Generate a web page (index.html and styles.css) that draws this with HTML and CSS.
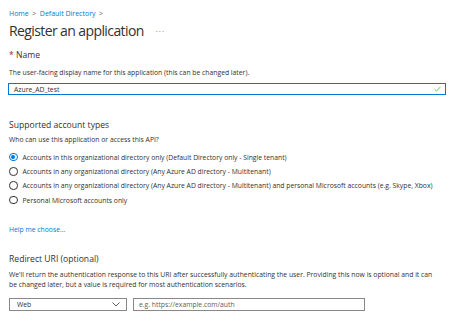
FILE: index.html
```html
<!DOCTYPE html>
<html lang="en">
<head>
    <meta charset="UTF-8">
    <title>Register an application</title>
    <link rel="stylesheet" href="styles.css">
</head>
<body>
    <div class="blade">
        <!-- Breadcrumb -->
        <nav class="crumbs">
            <a href="#">Home</a><span class="sep">&gt;</span><a href="#">Default Directory</a><span class="sep">&gt;</span>
        </nav>

        <div class="title-row">
            <h1>Register an application</h1>
            <span class="more">&middot;&middot;&middot;</span>
        </div>

        <!-- Name -->
        <section class="name-section">
            <h2 class="label"><span class="req">*</span> Name</h2>
            <p class="hint">The user-facing display name for this application (this can be changed later).</p>
            <div class="text-box active">
                <span>Azure_AD_test</span>
                <svg class="check" width="7" height="6" viewBox="0 0 7 6"><path d="M0.5 3.2 L2.5 5 L6.5 0.8" fill="none" stroke="#7fba4f" stroke-width="1"/></svg>
            </div>
        </section>

        <!-- Account types -->
        <section class="types-section">
            <h2 class="label">Supported account types</h2>
            <p class="hint">Who can use this application or access this API?</p>
            <ul class="radios">
                <li><span class="radio checked"></span>Accounts in this organizational directory only (Default Directory only - Single tenant)</li>
                <li><span class="radio"></span>Accounts in any organizational directory (Any Azure AD directory - Multitenant)</li>
                <li><span class="radio"></span>Accounts in any organizational directory (Any Azure AD directory - Multitenant) and personal Microsoft accounts (e.g. Skype, Xbox)</li>
                <li><span class="radio"></span>Personal Microsoft accounts only</li>
            </ul>
            <a class="help" href="#">Help me choose...</a>
        </section>

        <!-- Redirect -->
        <section class="redirect-section">
            <h2 class="label">Redirect URI (optional)</h2>
            <p class="hint wrap">We'll return the authentication response to this URI after successfully authenticating the user. Providing this now is optional and it can be changed later, but a value is required for most authentication scenarios.</p>
            <div class="uri-row">
                <div class="select-box">
                    <span>Web</span>
                    <svg width="8" height="5" viewBox="0 0 8 5"><path d="M0.5 0.5 L4 4 L7.5 0.5" fill="none" stroke="#323130" stroke-width="0.8"/></svg>
                </div>
                <div class="text-box uri">e.g. https://example.com/auth</div>
            </div>
        </section>
    </div>
</body>
</html>
```

FILE: styles.css
```css
/* Portal-ish blade */
body {
    margin: 0;
    background: #ffffff;
    font-family: 'Open Sans', 'Noto Sans', sans-serif;
    color: #323130;
}

.blade {
    padding: 8px 0 0 9px;
    width: 438px;
}

.crumbs {
    font-size: 7px;
    line-height: 10px;
    height: 10px;
    padding-top: 1px;
}

.crumbs a {
    color: #0078d4;
    text-decoration: none;
}

.crumbs .sep {
    color: #605e5c;
    margin: 0 3.5px;
}

.title-row {
    display: flex;
    align-items: center;
    margin-top: 4px;
    height: 15px;
}

h1 {
    margin: 0;
    font-size: 14px;
    font-weight: 400;
    letter-spacing: -0.6px;
}

.more {
    margin-left: 12px;
    font-size: 8px;
    color: #605e5c;
    letter-spacing: 1px;
}

.label {
    margin: 0;
    font-size: 8.6px;
    font-weight: 400;
    line-height: 12px;
}

.req {
    color: #a4262c;
}

.hint {
    margin: 0;
    font-size: 6.8px;
    line-height: 10px;
}

.name-section {
    margin-top: 11px;
}

.name-section .hint {
    margin-top: 7px;
}

.text-box {
    box-sizing: border-box;
    display: flex;
    align-items: center;
    justify-content: space-between;
    height: 12px;
    padding: 0 4px 0 5px;
    border: 1px solid #8a8886;
    font-size: 6.8px;
}

.text-box.active {
    margin-top: 5px;
    width: 438px;
    margin-left: -1px;
    border: 1.5px solid #0078d4;
}

.types-section {
    margin-top: 24px;
}

.types-section .hint {
    margin-top: 4px;
}

.radios {
    list-style: none;
    margin: 5px 0 0;
    padding: 0;
}

.radios li {
    display: flex;
    align-items: center;
    height: 14.3px;
    font-size: 6.8px;
}

.radio {
    box-sizing: border-box;
    width: 8.5px;
    height: 8.5px;
    border: 1px solid #323130;
    border-radius: 50%;
    margin: 0 5px 0 0;
    display: flex;
    align-items: center;
    justify-content: center;
}

.radio.checked {
    border-color: #0078d4;
}

.radio.checked::after {
    content: "";
    width: 4px;
    height: 4px;
    border-radius: 50%;
    background: #0078d4;
}

.help {
    display: block;
    margin-top: 18px;
    font-size: 6.8px;
    color: #0078d4;
    text-decoration: none;
}

.redirect-section {
    margin-top: 19px;
}

.redirect-section .hint {
    margin-top: 5px;
    width: 430px;
}

.uri-row {
    display: flex;
    gap: 6px;
    margin-top: 8px;
}

.select-box {
    box-sizing: border-box;
    display: flex;
    align-items: center;
    justify-content: space-between;
    width: 118px;
    height: 13px;
    padding: 0 6px 0 7px;
    border: 1px solid #8a8886;
    font-size: 6.8px;
}

.text-box.uri {
    width: 232px;
    height: 13px;
    color: #605e5c;
}
```
